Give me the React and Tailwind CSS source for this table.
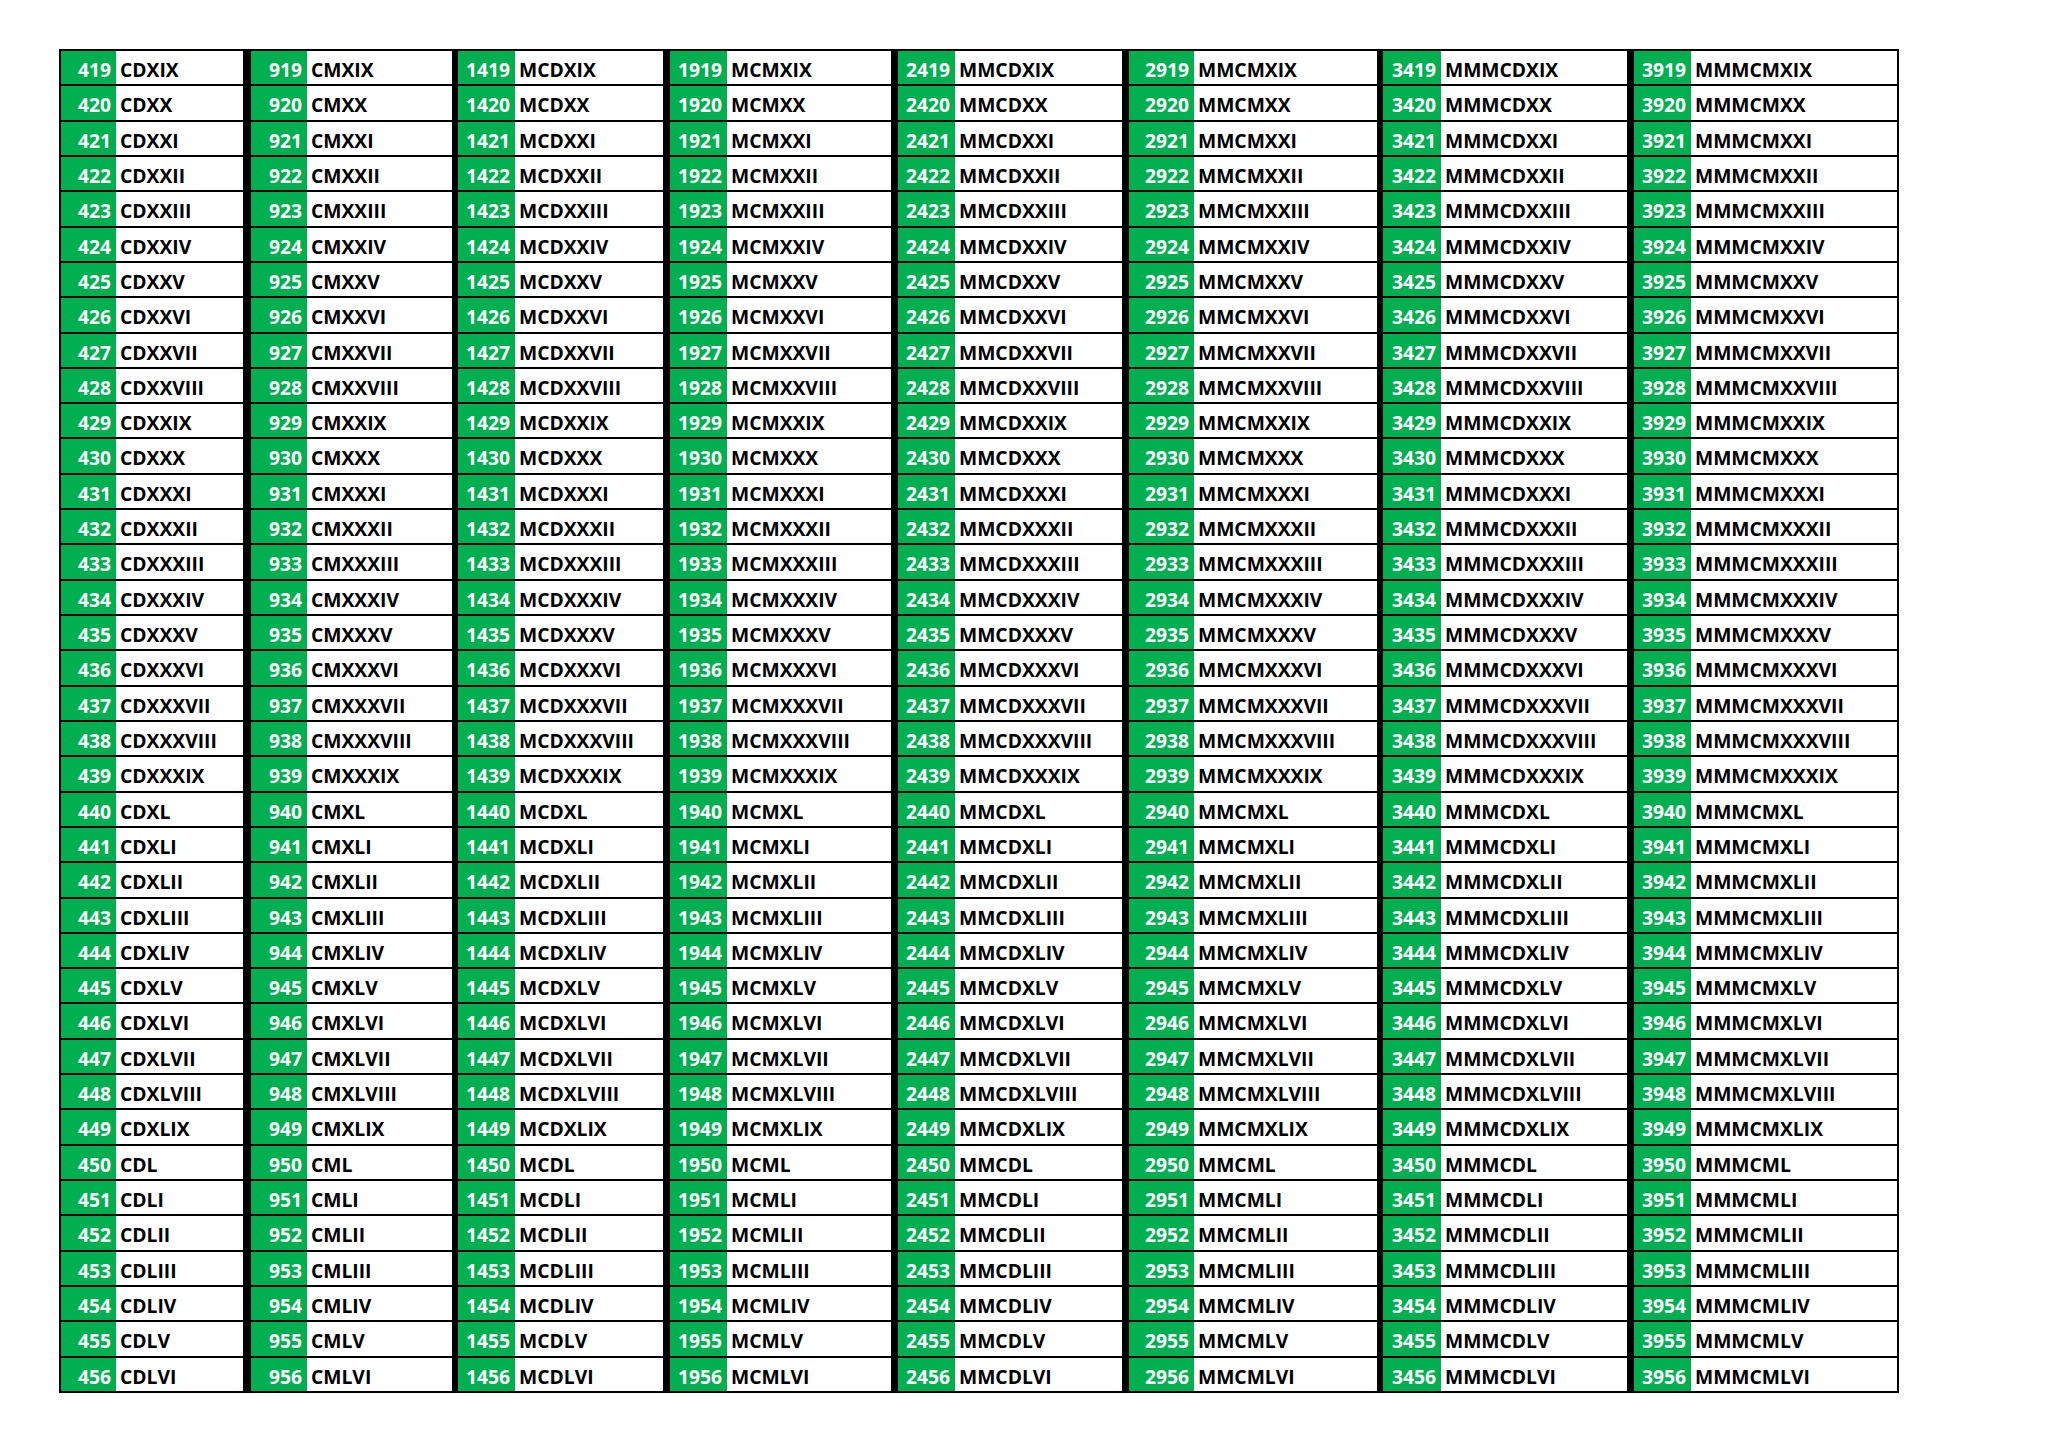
const groups = [
  { start: 419, green: 'w-[55px]', text: 'w-[127px]', sep: '' },
  { start: 919, green: 'w-[56px]', text: 'w-[145px]', sep: 'ml-[8px]' },
  { start: 1419, green: 'w-[57px]', text: 'w-[148px]', sep: 'ml-[6px]' },
  { start: 1919, green: 'w-[57px]', text: 'w-[164px]', sep: 'ml-[7px]' },
  { start: 2419, green: 'w-[57px]', text: 'w-[167px]', sep: 'ml-[7px]' },
  { start: 2919, green: 'w-[65px]', text: 'w-[183px]', sep: 'ml-[7px]' },
  { start: 3419, green: 'w-[58px]', text: 'w-[186px]', sep: 'ml-[6px]' },
  { start: 3919, green: 'w-[57px]', text: 'w-[206px]', sep: 'ml-[7px]' },
];

const ROWS = 38;

function toRoman(n) {
  const table = [
    [1000, 'M'], [900, 'CM'], [500, 'D'], [400, 'CD'],
    [100, 'C'], [90, 'XC'], [50, 'L'], [40, 'XL'],
    [10, 'X'], [9, 'IX'], [5, 'V'], [4, 'IV'], [1, 'I'],
  ];
  let out = '';
  for (const [v, s] of table) {
    while (n >= v) {
      out += s;
      n -= v;
    }
  }
  return out;
}

function Group({ group }) {
  const rows = Array.from({ length: ROWS }, (_, i) => group.start + i);
  return (
    <div className={`flex flex-col gap-[2px] ${group.sep}`}>
      {rows.map((n) => (
        <div key={n} className="flex h-[33.32px]">
          <div className={`${group.green} bg-[#00b050] text-white text-right pr-[5px] pt-[4px] leading-[29px]`}>
            {n}
          </div>
          <div className={`${group.text} bg-white text-black pl-[4px] pt-[4px] leading-[29px] whitespace-nowrap`}>
            {toRoman(n)}
          </div>
        </div>
      ))}
    </div>
  );
}

export default function App() {
  return (
    <div
      className="min-h-[1448px] bg-white pl-[59px] pt-[49px] text-[19.3px] font-bold"
      style={{ fontFamily: '"Open Sans", "Liberation Sans", sans-serif' }}
    >
      <div className="inline-flex bg-black p-[2px]">
        {groups.map((g) => (
          <Group key={g.start} group={g} />
        ))}
      </div>
    </div>
  );
}
